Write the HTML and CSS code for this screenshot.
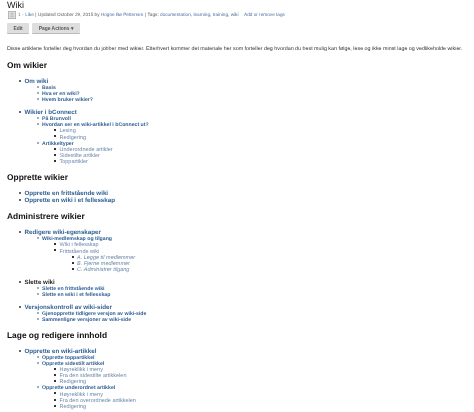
FILE: index.html
```html
<!DOCTYPE html>
<html lang="en">
<head>
    <meta charset="UTF-8">
    <meta name="viewport" content="width=device-width, initial-scale=1.0">
    <title>Wiki</title>
    <link rel="stylesheet" href="styles.css">
</head>
<body>
    <div class="page">
        <h1 class="title">Wiki</h1>
        <div class="meta">
            <span class="like-box">
                <svg class="like-icon" viewBox="0 0 10 10" width="8" height="8"><rect x="0.5" y="0.5" width="9" height="9" fill="#e8e8e8" stroke="#aaa"/><path d="M2 3h6M2 5h6M2 7h6M5 1v8" stroke="#bbb" fill="none"/></svg>
                <span class="like-count">1</span>
            </span>
            <span class="sep">·</span>
            <a href="#">Like</a>
            <span class="sep">|</span>
            <span>Updated October 29, 2015 by <a href="#">Hogne Bø Pettersen</a></span>
            <span class="sep">|</span>
            <span>Tags: <a href="#">documentation</a>, <a href="#">learning</a>, <a href="#">training</a>, <a href="#">wiki</a></span>
            <a href="#" class="add-tags">Add or remove tags</a>
        </div>
        <div class="actions">
            <button class="btn">Edit</button>
            <button class="btn">Page Actions ▾</button>
        </div>
        <p class="intro">Disse artiklene forteller deg hvordan du jobber med wikier. Etterhvert kommer det materiale her som forteller deg hvordan du best mulig kan følge, lese og ikke minst lage og vedlikeholde wikier.</p>

        <h2>Om wikier</h2>
        <ul class="toc">
            <li><a href="#">Om wiki</a>
                <ul>
                    <li><a href="#">Basis</a></li>
                    <li><a href="#">Hva er en wiki?</a></li>
                    <li><a href="#">Hvem bruker wikier?</a></li>
                </ul>
            </li>
            <li><a href="#">Wikier i bConnect</a>
                <ul>
                    <li><a href="#">På Brunvoll</a></li>
                    <li><a href="#">Hvordan ser en wiki-artikkel i bConnect ut?</a>
                        <ul>
                            <li><a href="#">Lesing</a></li>
                            <li><a href="#">Redigering</a></li>
                        </ul>
                    </li>
                    <li><a href="#">Artikkeltyper</a>
                        <ul>
                            <li><a href="#">Underordnede artikler</a></li>
                            <li><a href="#">Sidestilte artikler</a></li>
                            <li><a href="#">Toppartikler</a></li>
                        </ul>
                    </li>
                </ul>
            </li>
        </ul>

        <h2>Opprette wikier</h2>
        <ul class="toc toc-short">
            <li class="tight"><a href="#">Opprette en frittstående wiki</a></li>
            <li><a href="#">Opprette en wiki i et fellesskap</a></li>
        </ul>

        <h2>Administrere wikier</h2>
        <ul class="toc">
            <li><a href="#">Redigere wiki-egenskaper</a>
                <ul>
                    <li><a href="#">Wiki-medlemskap og tilgang</a>
                        <ul>
                            <li><a href="#">Wiki i fellesskap</a></li>
                            <li><a href="#">Frittstående wiki</a>
                                <ul>
                                    <li><a href="#">A. Legge til medlemmer</a></li>
                                    <li><a href="#">B. Fjerne medlemmer</a></li>
                                    <li><a href="#">C. Administrer tilgang</a></li>
                                </ul>
                            </li>
                        </ul>
                    </li>
                </ul>
            </li>
            <li><span class="plain">Slette wiki</span>
                <ul>
                    <li><a href="#">Slette en frittstående wiki</a></li>
                    <li><a href="#">Slette en wiki i et fellesskap</a></li>
                </ul>
            </li>
            <li><a href="#">Versjonskontroll av wiki-sider</a>
                <ul>
                    <li><a href="#">Gjenopprette tidligere versjon av wiki-side</a></li>
                    <li><a href="#">Sammenligne versjoner av wiki-side</a></li>
                </ul>
            </li>
        </ul>

        <h2>Lage og redigere innhold</h2>
        <ul class="toc">
            <li><a href="#">Opprette en wiki-artikkel</a>
                <ul>
                    <li><a href="#">Opprette toppartikkel</a></li>
                    <li><a href="#">Opprette sidestilt artikkel</a>
                        <ul>
                            <li><a href="#">Høyreklikk i meny</a></li>
                            <li><a href="#">Fra den sidestilte artikkelen</a></li>
                            <li><a href="#">Redigering</a></li>
                        </ul>
                    </li>
                    <li><a href="#">Opprette underordnet artikkel</a>
                        <ul>
                            <li><a href="#">Høyreklikk i meny</a></li>
                            <li><a href="#">Fra den overordnede artikkelen</a></li>
                            <li><a href="#">Redigering</a></li>
                        </ul>
                    </li>
                </ul>
            </li>
        </ul>
    </div>
</body>
</html>
```

FILE: styles.css
```css
html, body {
    margin: 0;
    padding: 0;
    background-color: #fff;
}
body {
    height: 412px;
    overflow: hidden;
}
.page {
    padding: 0 7px;
    font-family: "Liberation Sans", Arial, sans-serif;
    color: #333;
    text-rendering: geometricPrecision;
    filter: blur(0.25px);
}
a {
    color: #2f5f94;
    text-decoration: none;
}
.title {
    margin: 0;
    font-size: 9px;
    line-height: 10px;
    font-weight: normal;
    color: #111;
}
.meta {
    display: flex;
    align-items: center;
    gap: 1.5px;
    height: 9px;
    font-size: 4.7px;
    color: #555;
}
.meta a {
    color: #4a6f9c;
}
.like-box {
    display: flex;
    align-items: center;
    gap: 2px;
    margin-left: 1px;
}
.like-count {
    color: #777;
}
.add-tags {
    margin-left: 4px;
}
.actions {
    display: flex;
    gap: 3px;
    margin-top: 4px;
}
.btn {
    height: 11px;
    padding: 0 6.5px;
    border: none;
    border-bottom: 1px solid #bbb;
    border-radius: 1px;
    background-color: #dedede;
    color: #555;
    font-family: inherit;
    font-size: 4.9px;
    font-weight: bold;
}
.intro {
    margin: 11px 0 0;
    font-size: 5.35px;
    line-height: 8px;
    white-space: nowrap;
}
h2 {
    margin: 5px 0 0;
    font-size: 8.4px;
    line-height: 11px;
    color: #111;
}
.intro + h2 {
    margin-top: 7px;
}
.toc {
    margin: 8px 0 0;
    padding: 0 0 0 17.5px;
    list-style: none;
    font-size: 6.2px;
    line-height: 6.1px;
    font-weight: bold;
}
.toc li::before {
    content: "";
    display: inline-block;
    width: 2px;
    height: 2px;
    margin-left: -5.5px;
    margin-right: 3.5px;
    border-radius: 50%;
    background-color: #333;
    vertical-align: 0.2em;
}
.toc > li {
    margin-bottom: 6.8px;
}
.toc > li.tight {
    margin-bottom: 1.5px;
}
.toc-short {
    margin-bottom: 1.5px;
}
.toc ul {
    margin: 0;
    padding: 0 0 0 17.5px;
    list-style: none;
    font-size: 5.2px;
}
.toc ul > li::before {
    background-color: #7b93ad;
}
.toc ul ul {
    font-size: 5.5px;
    font-weight: normal;
}
.toc ul ul > li::before {
    border-radius: 0;
    background-color: #333;
}
.toc ul ul a {
    color: #6d88ab;
}
.toc ul ul ul a {
    font-style: italic;
}
.plain {
    color: #222;
}
```
